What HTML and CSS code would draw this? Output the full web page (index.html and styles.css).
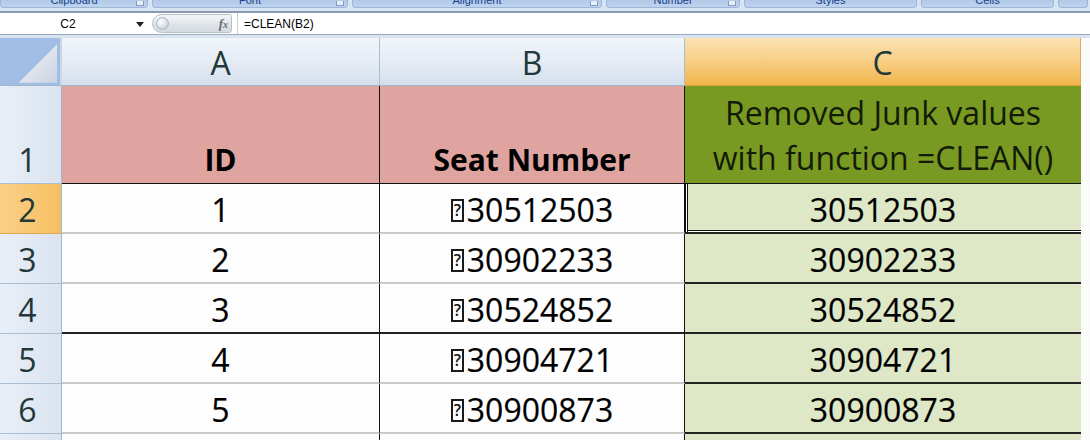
FILE: index.html
```html
<!DOCTYPE html>
<html>
<head>
<meta charset="utf-8">
<link rel="stylesheet" href="styles.css">
</head>
<body>
<div class="ribbon">
  <div class="rtab w1"><span>Clipboard</span><i class="launch"></i></div>
  <div class="rtab w2"><span>Font</span><i class="launch"></i></div>
  <div class="rtab w3"><span>Alignment</span><i class="launch"></i></div>
  <div class="rtab w4"><span>Number</span><i class="launch"></i></div>
  <div class="rtab w5"><span>Styles</span></div>
  <div class="rtab w6"><span>Cells</span></div>
  <div class="rtab w7"><span></span></div>
</div>
<div class="fbar">
  <div class="namebox">C2</div>
  <div class="ddarrow"><svg width="8" height="5" viewBox="0 0 8 5"><path d="M0 0H8L4 5Z" fill="#222"/></svg></div>
  <div class="fxbtn"><span class="orb"></span><span class="fx">f<small>x</small></span></div>
  <div class="finput">=CLEAN(B2)</div>
</div>
<div class="strip"></div>
<div class="sheet">
  <div class="corner"><svg width="61" height="47" viewBox="0 0 61 47"><defs><linearGradient id="tg" x1="0" y1="0" x2="1" y2="1"><stop offset="0" stop-color="#f4f7fb"/><stop offset="1" stop-color="#c9d3e0"/></linearGradient></defs><path d="M58 6V45H19Z" fill="url(#tg)"/></svg></div>
  <div class="colh">A</div>
  <div class="colh">B</div>
  <div class="colh sel">C</div>

  <div class="rowh">1</div>
  <div class="pink">ID</div>
  <div class="pink">Seat Number</div>
  <div class="green">Removed Junk values<br>with function =CLEAN()</div>

  <div class="rowh sel">2</div>
  <div class="cell">1</div>
  <div class="cell"><div class="val"><div class="qb">?</div>30512503</div></div>
  <div class="cellc active">30512503</div>

  <div class="rowh">3</div>
  <div class="cell">2</div>
  <div class="cell"><div class="val"><div class="qb">?</div>30902233</div></div>
  <div class="cellc">30902233</div>

  <div class="rowh">4</div>
  <div class="cell blk">3</div>
  <div class="cell blk"><div class="val"><div class="qb">?</div>30524852</div></div>
  <div class="cellc">30524852</div>

  <div class="rowh">5</div>
  <div class="cell">4</div>
  <div class="cell"><div class="val"><div class="qb">?</div>30904721</div></div>
  <div class="cellc">30904721</div>

  <div class="rowh">6</div>
  <div class="cell">5</div>
  <div class="cell"><div class="val"><div class="qb">?</div>30900873</div></div>
  <div class="cellc">30900873</div>

  <div class="rowh">7</div>
  <div class="cell"></div>
  <div class="cell"></div>
  <div class="cellc"></div>
</div>
</body>
</html>
```
FILE: styles.css
```css
html, body {
  margin: 0;
  padding: 0;
}
body {
  width: 1090px;
  height: 440px;
  overflow: hidden;
  background: #fbfbfb;
  font-family: "Open Sans", sans-serif;
}

/* ribbon group labels */
.ribbon {
  height: 11px;
  background: #d7e4f4;
  display: flex;
  gap: 4px;
  overflow: hidden;
}
.rtab {
  position: relative;
  height: 8px;
  box-sizing: border-box;
  background: linear-gradient(#b1c8e7, #c0d4ee);
  border: 1px solid #9db6d8;
  border-top: none;
  border-radius: 0 0 4px 4px;
  display: flex;
  justify-content: center;
  overflow: hidden;
}
.rtab span {
  font: 11px/11px "Liberation Sans", sans-serif;
  color: #15428b;
  margin-top: -5px;
}
.launch {
  position: absolute;
  right: 3px;
  bottom: 1px;
  width: 6px;
  height: 4px;
  border: 1px solid #7f9bc4;
  border-top: none;
  background: #e8eff8;
}
.w1 { width: 148px; }
.w2 { width: 196px; }
.w3 { width: 250px; }
.w4 { width: 134px; }
.w5 { width: 173px; }
.w6 { width: 133px; }
.w7 { width: 30px; }

/* formula bar */
.fbar {
  height: 24px;
  box-sizing: border-box;
  border-top: 2px solid #8a99ad;
  border-bottom: 1px solid #98a9bf;
  background: #fff;
  display: flex;
  align-items: center;
  font: 12px "Liberation Sans", sans-serif;
  color: #000;
}
.namebox {
  width: 136px;
  text-align: center;
}
.ddarrow {
  width: 14px;
  display: flex;
  align-items: center;
  padding-top: 2px;
}
.fxbtn {
  width: 80px;
  height: 19px;
  margin-left: 2px;
  box-sizing: border-box;
  border: 1px solid #b4bfcc;
  border-radius: 10px 3px 3px 10px;
  background: linear-gradient(#f5f7f9, #e2e6eb 50%, #d3d9e0);
  display: flex;
  align-items: center;
  justify-content: space-between;
  padding: 0 3px 0 3px;
}
.orb {
  width: 11px;
  height: 11px;
  border-radius: 50%;
  border: 1px solid #aab4c0;
  background: radial-gradient(circle at 35% 35%, #ffffff, #d0d6de 70%, #b8c0ca);
}
.fx {
  font: italic 700 13px "Liberation Serif", serif;
  color: #6b6b6b;
}
.fx small {
  font-size: 10px;
}
.finput {
  flex: 1;
  height: 100%;
  margin-left: 5px;
  padding-left: 6px;
  border-left: 1px solid #c6cdd6;
  display: flex;
  align-items: center;
}

.strip {
  height: 3px;
  background: #dae4f1;
}

/* sheet grid */
.sheet {
  display: grid;
  grid-template-columns: 62px 318px 305px 396px;
  grid-template-rows: 48px 98px repeat(6, 50px) 50px;
}
.sheet > div {
  box-sizing: border-box;
  display: flex;
  justify-content: center;
  align-items: flex-end;
  line-height: 1;
  font-size: 32px;
  color: #000;
}
.corner {
  background: #a2bde4;
  border-right: 2px solid #c9d6e6;
  border-bottom: 1px solid #9eb6ce;
  align-items: stretch !important;
  justify-content: flex-start !important;
}
.colh {
  background: linear-gradient(#f1f5fa, #e4ebf4 55%, #d5dfeb);
  border-right: 1px solid #a9bdd3;
  border-bottom: 1px solid #9eb6ce;
  color: #233838 !important;
  padding-bottom: 6px;
}
.colh.sel {
  background: linear-gradient(#fbe2b2, #f8d08a 45%, #f2b54a);
  border-bottom-color: #e3a13e;
  border-right-color: #e0a95a;
}
.rowh {
  background: linear-gradient(90deg, #e9eff8, #dae3ef);
  border-right: 1px solid #9eb6ce;
  border-bottom: 1px solid #a9bdd3;
  color: #233838 !important;
  padding-bottom: 7px;
  padding-right: 6px;
}
.rowh.sel {
  background: linear-gradient(90deg, #fad088, #f6bf60);
  border-bottom-color: #e3a84e;
}
.pink {
  background: #dfa4a0;
  border-right: 1px solid #111;
  border-bottom: 1px solid #111;
  font-weight: 700;
  font-size: 30px !important;
  padding-bottom: 8px;
}
.green {
  background: #789a22;
  border-bottom: 1px solid #111;
  align-items: center !important;
  text-align: center;
  line-height: 45px !important;
  color: #141a08 !important;
}
.cell {
  background: #fdfdfd;
  border-right: 1px solid #111;
  border-bottom: 2px solid #cacaca;
  padding-bottom: 6px;
  -webkit-text-stroke: 0.2px #000;
}
.cell.blk {
  border-bottom: 2px solid #222;
}
.cellc {
  background: #dfe8c6;
  border-bottom: 2px solid #222;
  padding-bottom: 6px;
  -webkit-text-stroke: 0.2px #000;
}
.cellc.active {
  box-shadow: inset 1px 0 0 #111, inset 2px 0 0 #fff, inset 3px 0 0 #111, inset 0 -1px 0 #fff, inset 0 -2px 0 #111;
}
.val {
  display: flex;
  align-items: baseline;
  white-space: nowrap;
}
.qb {
  width: 13px;
  height: 23px;
  flex: 0 0 13px;
  box-sizing: border-box;
  border: 2px solid #1a1a1a;
  margin-right: 3px;
  align-self: flex-end;
  margin-bottom: 4px;
  font-size: 16px;
  font-weight: 600;
  line-height: 19px;
  text-align: center;
  color: #111;
  -webkit-text-stroke: 0px;
}
```
